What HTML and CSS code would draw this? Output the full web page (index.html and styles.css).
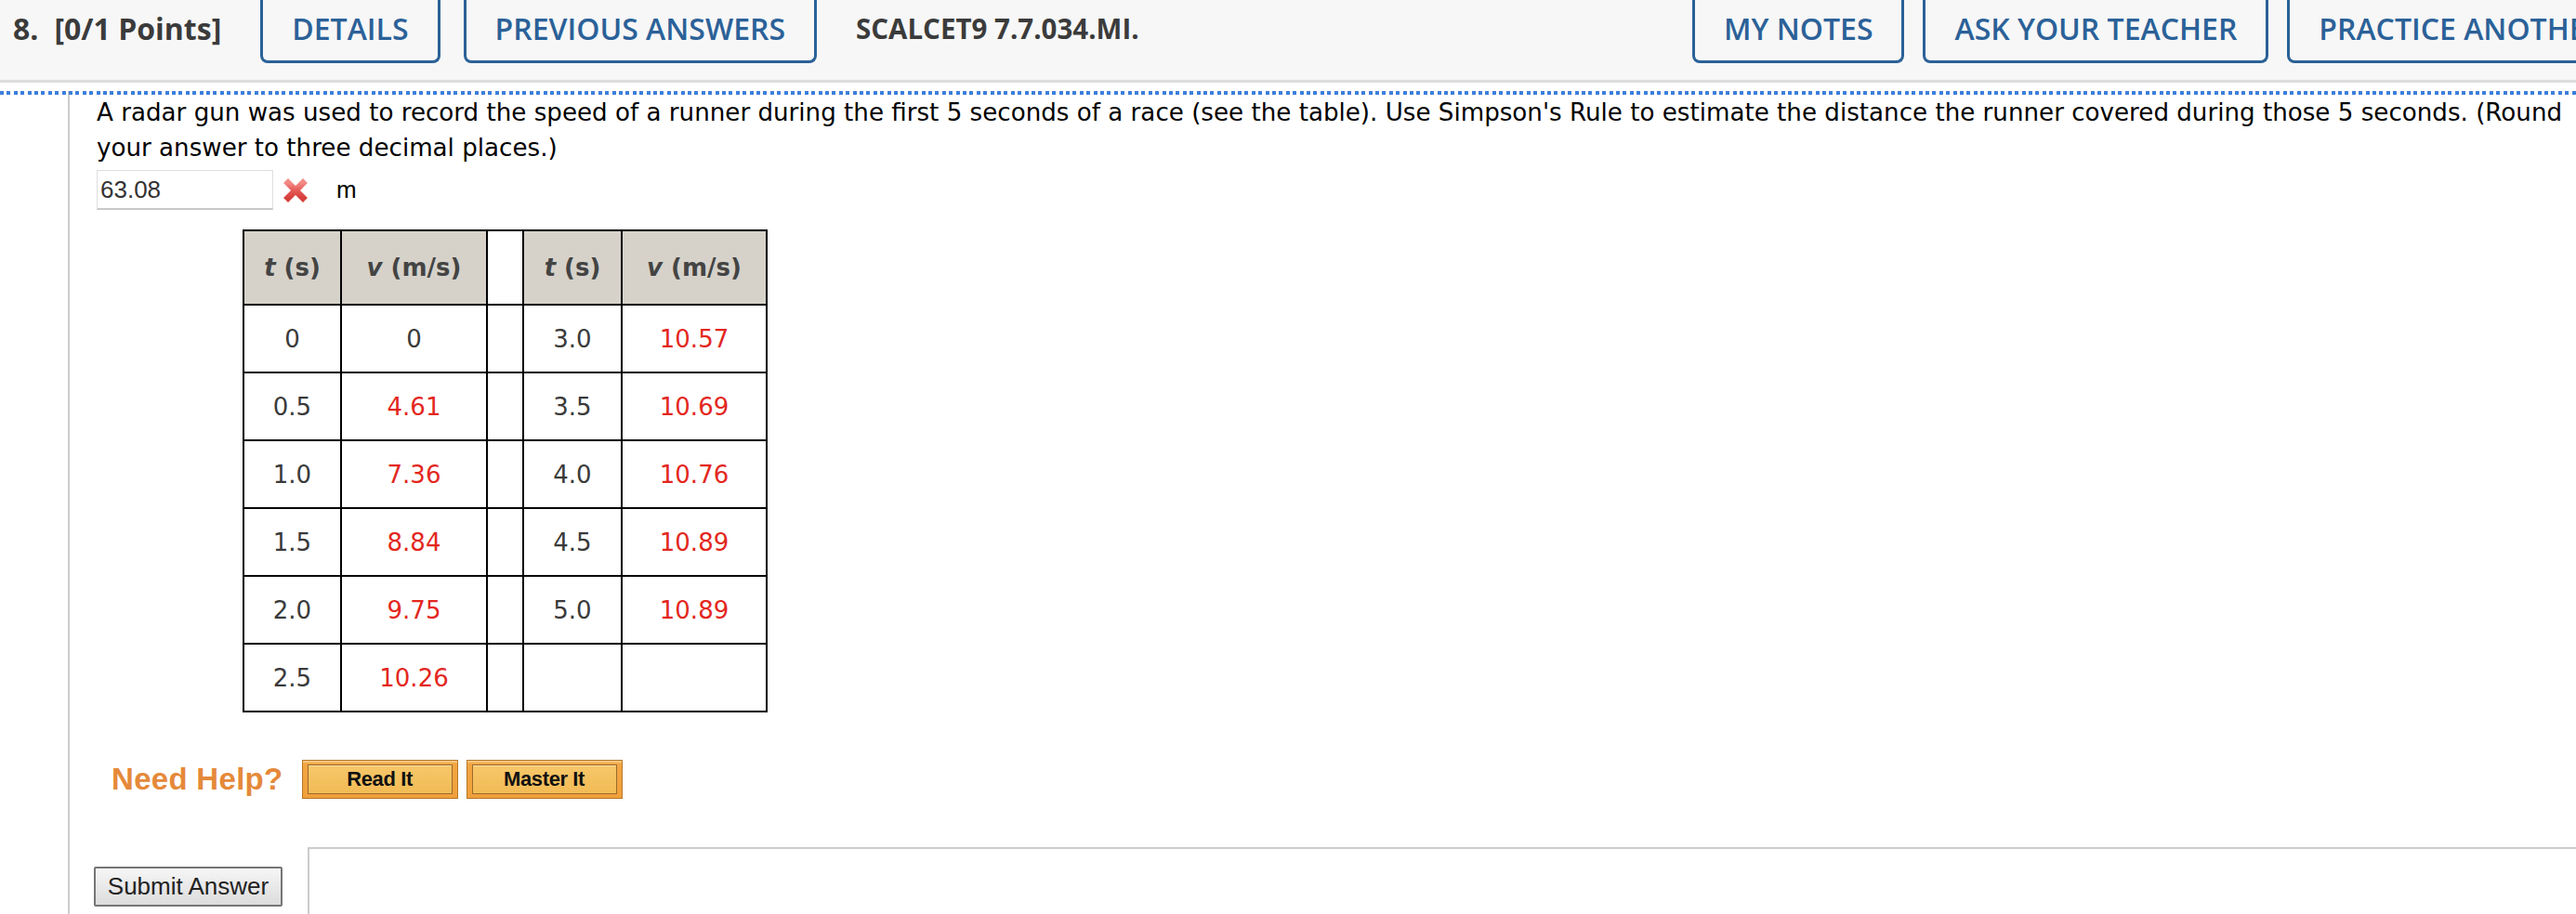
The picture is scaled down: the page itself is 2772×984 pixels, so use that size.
FILE: index.html
```html
<!DOCTYPE html>
<html lang="en">
<head>
<meta charset="utf-8">
<title>Question 8</title>
<link rel="stylesheet" href="styles.css">
</head>
<body>
<header class="qhead">
  <span class="qnum">8.</span>
  <span class="qpts">[0/1 Points]</span>
  <a class="tab tab-first">DETAILS</a>
  <a class="tab">PREVIOUS ANSWERS</a>
  <span class="qcode">SCALCET9 7.7.034.MI.</span>
  <nav class="tabs-right">
    <a class="tab">MY NOTES</a>
    <a class="tab">ASK YOUR TEACHER</a>
    <a class="tab">PRACTICE ANOTHER</a>
  </nav>
</header>
<main class="question">
  <div class="dots"></div>
  <div class="content">
    <p class="prompt">A radar gun was used to record the speed of a runner during the first 5 seconds of a race (see the table). Use Simpson's Rule to estimate the distance the runner covered during those 5 seconds. (Round your answer to three decimal places.)</p>
    <div class="answer-row">
      <input class="answer" type="text" value="63.08" readonly>
      <svg class="x-icon" width="26" height="26" viewBox="0 0 26 26" aria-hidden="true">
        <defs>
          <linearGradient id="xg" x1="0" y1="0" x2="0" y2="1">
            <stop offset="0" stop-color="#f28a86"/>
            <stop offset="0.5" stop-color="#e55a57"/>
            <stop offset="1" stop-color="#d63f3c"/>
          </linearGradient>
        </defs>
        <path d="M5 5 L21 21 M21 5 L5 21" stroke="url(#xg)" stroke-width="7" stroke-linecap="square" fill="none"/>
      </svg>
      <span class="unit">m</span>
    </div>
    <table class="data">
      <colgroup>
        <col class="c-t"><col class="c-v"><col class="c-gap"><col class="c-t2"><col class="c-v2">
      </colgroup>
      <tr class="head">
        <th><i>t</i> (s)</th><th><i>v</i> (m/s)</th><td class="gap"></td><th><i>t</i> (s)</th><th><i>v</i> (m/s)</th>
      </tr>
      <tr><td>0</td><td>0</td><td class="gap"></td><td>3.0</td><td class="red">10.57</td></tr>
      <tr><td>0.5</td><td class="red">4.61</td><td class="gap"></td><td>3.5</td><td class="red">10.69</td></tr>
      <tr><td>1.0</td><td class="red">7.36</td><td class="gap"></td><td>4.0</td><td class="red">10.76</td></tr>
      <tr><td>1.5</td><td class="red">8.84</td><td class="gap"></td><td>4.5</td><td class="red">10.89</td></tr>
      <tr><td>2.0</td><td class="red">9.75</td><td class="gap"></td><td>5.0</td><td class="red">10.89</td></tr>
      <tr><td>2.5</td><td class="red">10.26</td><td class="gap"></td><td></td><td></td></tr>
    </table>
    <div class="help">
      <span class="help-label">Need Help?</span>
      <a class="help-btn"><span>Read It</span></a>
      <a class="help-btn"><span>Master It</span></a>
    </div>
    <div class="submit-row">
      <button class="submit" type="button">Submit Answer</button>
      <div class="notes-box"></div>
    </div>
  </div>
</main>
</body>
</html>
```
FILE: styles.css
```css
html, body {
  margin: 0;
  padding: 0;
  overflow: hidden;
  background: #ffffff;
}

body {
  width: 2772px;
  height: 984px;
}

/* ---------- header ---------- */
.qhead {
  display: flex;
  align-items: flex-start;
  width: 2857px;
  height: 86px;
  background: #f7f7f7;
  border-bottom: 3px solid #dddddd;
  font-family: "Open Sans", "Liberation Sans", sans-serif;
}

.qnum,
.qpts,
.qcode {
  font-size: 32px;
  font-weight: 700;
  line-height: 40px;
  color: #3b3b3b;
  padding-top: 11px;
}

.qnum {
  margin-left: 14px;
}

.qpts {
  margin-left: 17px;
}

.qcode {
  font-size: 29.5px;
  margin-left: 42px;
}

.tab {
  display: block;
  height: 54px;
  padding: 11px 31px 0;
  border: 3px solid #2a6197;
  border-top: none;
  border-radius: 0 0 8px 8px;
  font-size: 32px;
  font-weight: 600;
  line-height: 40px;
  color: #2b6198;
  white-space: nowrap;
  margin-left: 25px;
}

.tab-first {
  margin-left: 42px;
}

.tabs-right {
  display: flex;
  margin-left: auto;
  margin-right: 20px;
}

.tabs-right .tab {
  margin-left: 20px;
}

.tabs-right .tab:first-child {
  margin-left: 0;
}

/* ---------- question body ---------- */
.question {
  min-height: 895px;
  background: linear-gradient(#cccccc, #cccccc) 73px 0 / 2px 100% no-repeat;
}

.dots {
  height: 4px;
  margin-top: 9px;
  background: repeating-linear-gradient(90deg, #3d7fdb 0 4px, transparent 4px 7.4px);
}

.content {
  padding-left: 104px;
}

.prompt {
  margin: 0;
  font-family: "DejaVu Sans", Verdana, sans-serif;
  font-size: 26.15px;
  line-height: 38px;
  color: #000000;
}

.answer-row {
  display: flex;
  align-items: center;
  margin-top: 5px;
  height: 43px;
}

.answer {
  box-sizing: border-box;
  width: 190px;
  height: 43px;
  margin: 0;
  padding: 0 3px;
  border: 1px solid #dedede;
  border-bottom: 2px solid #c9c9c9;
  border-radius: 0;
  font-family: "Liberation Sans", Arial, sans-serif;
  font-size: 26px;
  color: #333333;
  background: #ffffff;
  outline: none;
}

.x-icon {
  margin-left: 11px;
  flex-shrink: 0;
}

.unit {
  margin-left: 31px;
  font-family: "Liberation Sans", Arial, sans-serif;
  font-size: 26px;
  color: #000000;
}

/* ---------- table ---------- */
.data {
  table-layout: fixed;
  width: 563px;
  margin: 21px 0 0 157px;
  border-collapse: collapse;
  font-family: "DejaVu Sans", Verdana, sans-serif;
  font-size: 26px;
  color: #3a3a3a;
  text-align: center;
}

.c-t { width: 105px; }
.c-v { width: 157px; }
.c-gap { width: 39px; }
.c-t2 { width: 106px; }
.c-v2 { width: 156px; }

.data th,
.data td {
  border: 2px solid #000000;
  height: 71px;
  padding: 0;
}

.data .head th,
.data .head td {
  height: 78px;
}

.data th {
  background: #d6d2ca;
  font-weight: 700;
  color: #444444;
}

.data td.gap {
  background: #ffffff;
}

.data .red {
  color: #e3271e;
}

/* ---------- help ---------- */
.help {
  display: flex;
  align-items: center;
  margin-top: 51px;
  height: 42px;
}

.help-label {
  margin-left: 16px;
  margin-right: 20px;
  font-family: "Liberation Sans", Arial, sans-serif;
  font-size: 33px;
  font-weight: 700;
  color: #e5893a;
  letter-spacing: 0.3px;
}

.help-btn {
  box-sizing: border-box;
  display: block;
  width: 168px;
  height: 42px;
  margin-right: 9px;
  padding: 4px 5px;
  border: 1px solid #b67628;
  background: linear-gradient(#f9d49a 0, #f2a643 3px, #f0a03a 100%);
}

.help-btn span {
  box-sizing: border-box;
  display: block;
  height: 32px;
  border: 1px solid #9a6a2c;
  background: linear-gradient(#f6c76a, #f2bb55);
  box-shadow: inset 0 1px 0 #fbe0a4;
  font-family: "Liberation Sans", Arial, sans-serif;
  font-size: 22px;
  font-weight: 700;
  line-height: 30px;
  color: #111111;
  text-align: center;
  letter-spacing: -0.4px;
}

/* ---------- submit ---------- */
.submit-row {
  display: flex;
  align-items: flex-start;
  margin-top: 52px;
  margin-right: -20px;
}

.submit {
  box-sizing: border-box;
  width: 203px;
  height: 43px;
  margin: 21px 0 0 -3px;
  padding: 0;
  border: 2px solid #757575;
  border-radius: 2px;
  background: linear-gradient(#f6f6f6, #dcdcdc);
  font-family: "Liberation Sans", Arial, sans-serif;
  font-size: 26px;
  color: #222222;
}

.notes-box {
  flex: 1;
  height: 120px;
  margin-left: 27px;
  border: 2px solid #cccccc;
}
```
